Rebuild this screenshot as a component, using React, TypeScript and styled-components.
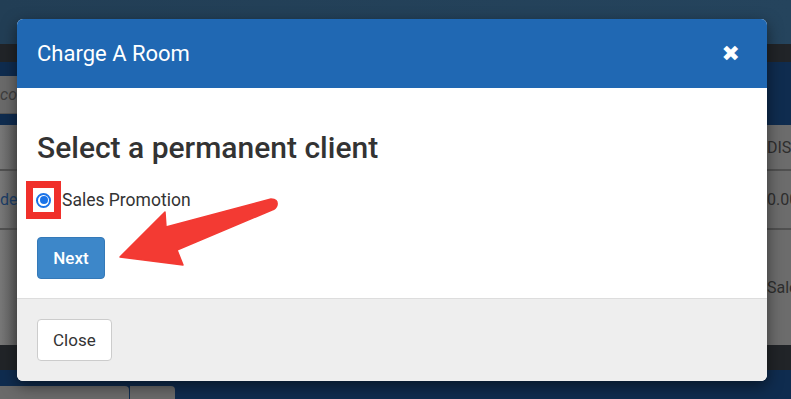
import styled, { createGlobalStyle } from "styled-components";

const GlobalStyle = createGlobalStyle`
  html, body {
    margin: 0;
    padding: 0;
    width: 791px;
    height: 399px;
    overflow: hidden;
    font-family: Roboto, "Liberation Sans", sans-serif;
  }
  * { box-sizing: border-box; }
`;

const Page = styled.div`
  position: relative;
  width: 791px;
  height: 399px;
  overflow: hidden;
  display: flex;
  flex-direction: column;
  background: #0f2c4f;
`;

const TopBar = styled.div`
  height: 44px;
  background: linear-gradient(90deg, #223e55, #25445d);
`;

const NavBar = styled.div`
  height: 18px;
  background: #212428;
`;

const Main = styled.div`
  flex: 1;
  display: flex;
  flex-direction: column;
  padding-top: 14px;
`;

const SearchBox = styled.div`
  height: 38px;
  width: 300px;
  background: #6a6a6a;
  border-bottom: 1px solid #555;
  color: #3e3e3e;
  font-style: italic;
  font-size: 16px;
  line-height: 38px;
`;

const Panel = styled.div`
  margin-top: 11px;
  height: 220px;
  background: linear-gradient(90deg, #787878, #5e5e5e 18px, #6c6c6c 60px, #6c6c6c);
  display: grid;
  grid-template-columns: 1fr 24px;
  grid-template-rows: 46px 59px 1fr;
  color: #2e2e2e;
  font-size: 16px;
`;

const Cell = styled.div<{ $line?: boolean; $blue?: boolean }>`
  display: flex;
  align-items: center;
  white-space: nowrap;
  overflow: hidden;
  border-bottom: ${(p) => (p.$line ? "2px solid #505050" : "none")};
  color: ${(p) => (p.$blue ? "#1c3d66" : "#2e2e2e")};
`;

const DarkBar = styled.div`
  height: 25px;
  background: #212428;
`;

const Tabs = styled.div`
  margin-top: 16px;
  display: flex;
  gap: 1px;
`;

const Tab = styled.div<{ $w: number }>`
  width: ${(p) => p.$w}px;
  height: 13px;
  background: #6a6a6a;
  border-radius: 0 4px 0 0;
`;

const Modal = styled.div`
  position: absolute;
  left: 17px;
  top: 19px;
  width: 750px;
  height: 362px;
  border-radius: 6px;
  overflow: hidden;
  background: #fff;
  box-shadow: 0 5px 15px rgba(0, 0, 0, 0.5);
  display: flex;
  flex-direction: column;
`;

const Header = styled.div`
  height: 69px;
  flex-shrink: 0;
  background: #2068b3;
  color: #fff;
  display: flex;
  align-items: center;
  justify-content: space-between;
  padding: 0 27px 0 20px;
`;

const Title = styled.h4`
  margin: 0;
  font-size: 22px;
  font-weight: 400;
`;

const CloseX = styled.span`
  font-size: 22px;
  font-weight: 700;
  line-height: 1;
  font-family: "DejaVu Sans", sans-serif;
`;

const Body = styled.div`
  position: relative;
  flex: 1;
  padding: 42px 20px 0;
  display: flex;
  flex-direction: column;
`;

const Heading = styled.h3`
  margin: 0;
  font-size: 30px;
  font-weight: 500;
  color: #333;
  line-height: 36px;
`;

const Option = styled.label`
  margin-top: 15px;
  display: flex;
  align-items: center;
  gap: 1px;
  font-size: 17.5px;
  color: #333;
`;

const RadioFrame = styled.span`
  margin-left: -11px;
  width: 35px;
  height: 38px;
  border: 7px solid #f0302b;
  display: flex;
  align-items: center;
  justify-content: center;
  background: #fff;
`;

const Radio = styled.span`
  width: 15px;
  height: 15px;
  border-radius: 50%;
  border: 2px solid #1a73e8;
  display: flex;
  align-items: center;
  justify-content: center;
  &::after {
    content: "";
    width: 8px;
    height: 8px;
    border-radius: 50%;
    background: #1a73e8;
  }
`;

const Button = styled.button<{ $primary?: boolean }>`
  font-family: Roboto, "Liberation Sans", sans-serif;
  font-size: 17px;
  height: 42px;
  padding: 0 15px;
  border-radius: 4px;
  cursor: pointer;
  background: ${(p) => (p.$primary ? "#3d87c9" : "#fff")};
  color: ${(p) => (p.$primary ? "#fff" : "#333")};
  border: 1px solid ${(p) => (p.$primary ? "#3479b8" : "#ccc")};
  font-weight: ${(p) => (p.$primary ? 500 : 400)};
`;

const NextButton = styled(Button)`
  margin-top: 18px;
  width: 68px;
  align-self: flex-start;
`;

const Footer = styled.div`
  height: 83px;
  flex-shrink: 0;
  background: #eeeeee;
  border-top: 1px solid #dddddd;
  display: flex;
  align-items: center;
  padding: 0 20px;
`;

const Arrow = styled.svg`
  position: absolute;
  left: 0;
  top: 0;
  pointer-events: none;
`;

export default function App() {
  return (
    <>
      <GlobalStyle />
      <Page>
        <TopBar />
        <NavBar />
        <Main>
          <SearchBox>co</SearchBox>
          <Panel>
            <Cell $line />
            <Cell $line>DISC</Cell>
            <Cell $line $blue>de</Cell>
            <Cell $line>0.00</Cell>
            <Cell />
            <Cell>Sale</Cell>
          </Panel>
          <DarkBar />
          <Tabs>
            <Tab $w={129} />
            <Tab $w={45} />
          </Tabs>
        </Main>
        <Modal>
          <Header>
            <Title>Charge A Room</Title>
            <CloseX>✖</CloseX>
          </Header>
          <Body>
            <Heading>Select a permanent client</Heading>
            <Option>
              <RadioFrame>
                <Radio />
              </RadioFrame>
              Sales Promotion
            </Option>
            <NextButton $primary>Next</NextButton>
            <Arrow width="300" height="220" viewBox="17 88 300 220">
              <path
                d="M120 257 L165 212 L166 227 L271 199 Q278 199 277 205 Q276 209 272 210 L177 250 L183 265 Z"
                fill="#f33a33"
                stroke="#f33a33"
                strokeWidth="1.5"
                strokeLinejoin="round"
              />
            </Arrow>
          </Body>
          <Footer>
            <Button>Close</Button>
          </Footer>
        </Modal>
      </Page>
    </>
  );
}
